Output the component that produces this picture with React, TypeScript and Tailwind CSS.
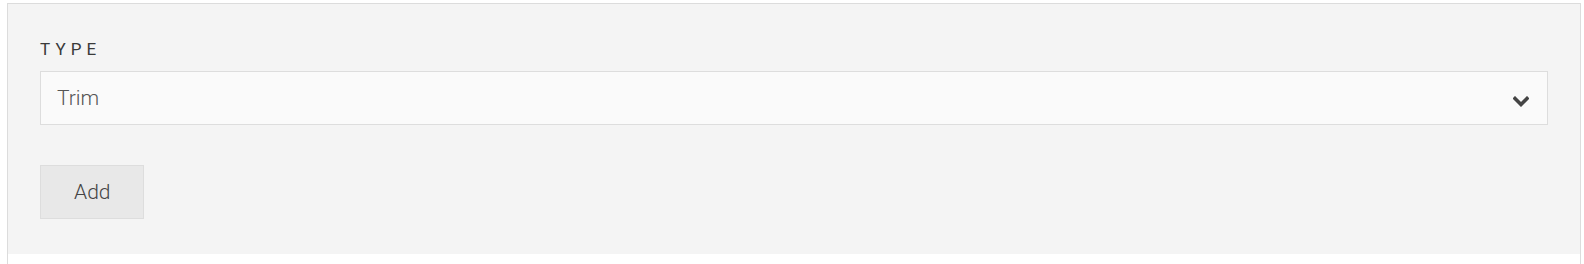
import { useState } from 'react'

const types = ['Trim', 'Uppercase', 'Lowercase', 'Replace']

function Chevron() {
  return (
    <svg width="16" height="11" viewBox="0 0 16 11" className="pointer-events-none absolute right-[19px] top-[25px]">
      <path d="M2 2.5 L8 8.5 L14 2.5" fill="none" stroke="#444" strokeWidth="3.6" strokeLinecap="square" strokeLinejoin="miter" />
    </svg>
  )
}

export default function App() {
  const [type, setType] = useState('Trim')

  return (
    <div className="ml-[7px] mr-[3px] mt-[3px] min-h-[320px] border border-[#dcdcdc] bg-white font-['Roboto',sans-serif]">
      <div className="bg-[#f4f4f4] px-8 pt-[33px] pb-[35px]">
        <label className="block text-[17px] leading-6 font-normal tracking-[0.3em] text-[#3a3a3a]">TYPE</label>

        <div className="relative mt-[10px]">
          <select
            value={type}
            onChange={(e) => setType(e.target.value)}
            className="h-[54px] w-full appearance-none border border-[#dddddd] bg-[#fafafa] px-4 text-[21px] font-light leading-7 text-[#555] outline-none"
          >
            {types.map((t) => (
              <option key={t}>{t}</option>
            ))}
          </select>
          <Chevron />
        </div>

        <button className="mt-[40px] h-[54px] border border-[#dddddd] bg-[#e8e8e8] px-[33px] text-[21px] font-light leading-7 text-[#444]">
          Add
        </button>
      </div>
    </div>
  )
}
